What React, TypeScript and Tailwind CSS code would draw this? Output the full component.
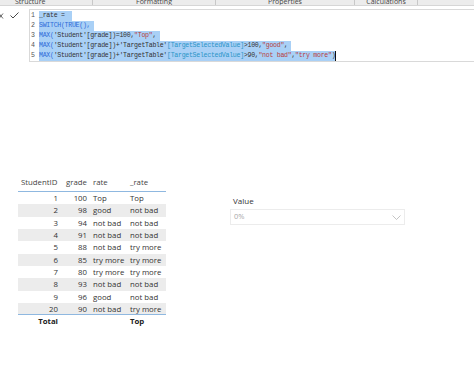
import React from "react";

type Seg = [string, string];
const FN = "text-[#2f6bd8]";
const STR = "text-[#b8403f]";
const COL = "text-[#2b95c7]";
const TX = "text-[#333333]";

const lines: Seg[][] = [
  [["_rate = ", TX]],
  [["SWITCH(TRUE(),", FN]],
  [["MAX(", FN], ["'Student'[grade])=100,", TX], ['"Top"', STR], [",", TX]],
  [
    ["MAX(", FN],
    ["'Student'[grade])+'TargetTable'", TX],
    ["[TargetSelectedValue]", COL],
    [">100,", TX],
    ['"good"', STR],
    [",", TX],
  ],
  [
    ["MAX(", FN],
    ["'Student'[grade])+'TargetTable'", TX],
    ["[TargetSelectedValue]", COL],
    [">90,", TX],
    ['"not bad"', STR],
    [",", TX],
    ['"try more"', STR],
    [")", TX],
  ],
];

const rows: [string, string, string, string][] = [
  ["1", "100", "Top", "Top"],
  ["2", "98", "good", "not bad"],
  ["3", "94", "not bad", "not bad"],
  ["4", "91", "not bad", "not bad"],
  ["5", "88", "not bad", "try more"],
  ["6", "85", "try more", "try more"],
  ["7", "80", "try more", "try more"],
  ["8", "93", "not bad", "not bad"],
  ["9", "96", "good", "not bad"],
  ["20", "90", "not bad", "try more"],
];

export default function App() {
  return (
    <div className="w-[474px] h-[374px] bg-white overflow-hidden font-['Open_Sans','Noto_Sans',sans-serif]">
      {/* tab bar (cut off at top) */}
      <div className="h-[6px] bg-[#ececec] border-b border-[#d6d6d6] flex overflow-hidden text-[7px] text-[#444] leading-[7px]">
        <div className="w-[93px] border-r border-[#c8c8c8] pl-[15px] -mt-[2px]">Structure</div>
        <div className="w-[123px] border-r border-[#c8c8c8] text-center -mt-[2px]">Formatting</div>
        <div className="w-[139px] border-r border-[#c8c8c8] text-center -mt-[2px]">Properties</div>
        <div className="w-[63px] border-r border-[#c8c8c8] text-center -mt-[2px]">Calculations</div>
        <div className="flex-1" />
      </div>

      {/* formula bar */}
      <div className="flex mt-[3px]">
        <div className="w-[29px] flex items-start pt-[3px]">
          <svg width="4" height="6" viewBox="0 0 4 6" className="mt-[1px]">
            <path d="M-1 0.5 L3 5.5 M3 0.5 L-1 5.5" stroke="#444" strokeWidth="0.8" fill="none" />
          </svg>
          <svg width="9" height="7" viewBox="0 0 9 7" className="ml-[6px] mt-[0px]">
            <path d="M0.5 3.5 L3 6 L8.5 0.5" stroke="#333" strokeWidth="0.9" fill="none" />
          </svg>
        </div>
        <div className="flex-1 h-[53px] border border-r-0 border-[#d9d9d9] flex pt-[1px]">
          <div className="w-[9px] pl-[1px] font-['Liberation_Mono',monospace] text-[6.6px] tracking-[-0.3px] leading-[10px] text-[#555]">
            {lines.map((_, i) => (
              <div key={i}>{i + 1}</div>
            ))}
          </div>
          <div className="font-['Liberation_Mono',monospace] text-[6.6px] tracking-[-0.3px] leading-[10px] whitespace-pre">
            {lines.map((segs, i) => (
              <div key={i} className="flex">
                <span className="bg-[#a9d0f6] flex items-center">
                  {segs.map(([t, c], j) => (
                    <span key={j} className={c}>
                      {t}
                    </span>
                  ))}
                  {i < lines.length - 1 ? <span> </span> : null}
                </span>
                {i === lines.length - 1 ? (
                  <span className="w-[1px] h-[10px] bg-[#111]" />
                ) : null}
              </div>
            ))}
          </div>
        </div>
      </div>

      {/* lower area */}
      <div className="flex items-start mt-[114px]">
        {/* table */}
        <div className="ml-[18px] w-[148px] text-[7.8px] text-[#333]">
          <div className="flex h-[16px] leading-[12px] border-b border-[#8fb8e0] text-[#444]">
            <div className="w-[43px] pl-[3px]">StudentID</div>
            <div className="w-[28px] text-right pr-[2px]">grade</div>
            <div className="w-[38px] pl-[4px]">rate</div>
            <div className="w-[39px] pl-[3px]">_rate</div>
          </div>
          {rows.map((r, i) => (
            <div
              key={i}
              className={`flex h-[12.33px] leading-[12.33px] ${i % 2 === 1 ? "bg-[#ececec]" : ""} ${
                i === rows.length - 1 ? "border-b border-[#8fb8e0]" : ""
              }`}
            >
              <div className="w-[43px] text-right pr-[3px]">{r[0]}</div>
              <div className="w-[28px] text-right pr-[2px]">{r[1]}</div>
              <div className="w-[38px] pl-[4px] whitespace-nowrap">{r[2]}</div>
              <div className="w-[39px] pl-[3px] whitespace-nowrap">{r[3]}</div>
            </div>
          ))}
          <div className="flex h-[13px] leading-[13px] font-bold text-[#222]">
            <div className="w-[43px] text-right pr-[3px]">Total</div>
            <div className="w-[28px]" />
            <div className="w-[38px]" />
            <div className="w-[39px] pl-[3px]">Top</div>
          </div>
        </div>

        {/* slicer */}
        <div className="ml-[64px] mt-[19px] w-[175px]">
          <div className="pl-[3px] text-[8px] leading-[12px] text-[#333]">Value</div>
          <div className="mt-[2px] h-[16px] border border-[#ececec] flex items-center justify-between pl-[3px] pr-[3px]">
            <span className="text-[7.5px] text-[#a8a8a8]">0%</span>
            <svg width="9" height="5" viewBox="0 0 9 5">
              <path d="M0.5 0.5 L4.5 4.5 L8.5 0.5" stroke="#b5b5b5" strokeWidth="0.8" fill="none" />
            </svg>
          </div>
        </div>
      </div>
    </div>
  );
}
